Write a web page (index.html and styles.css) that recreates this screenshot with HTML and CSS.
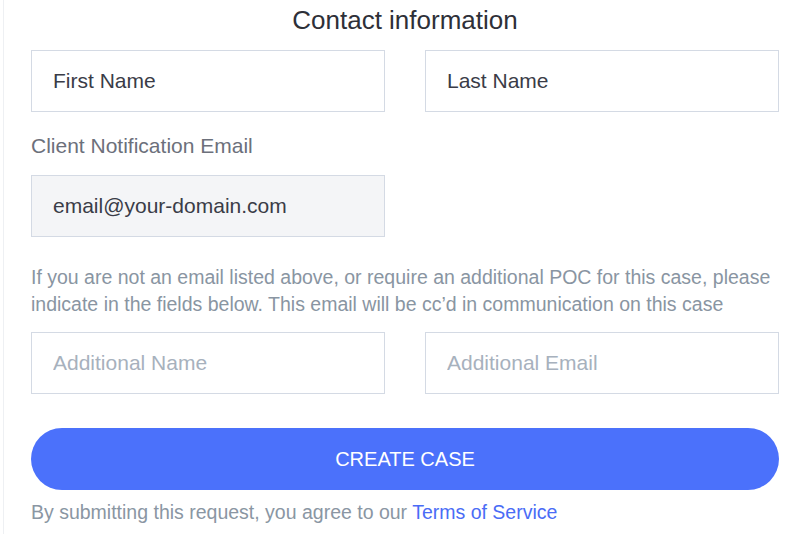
FILE: index.html
```html
<!DOCTYPE html>
<html>

<head>
    <meta charset="utf-8">
    <meta name="viewport" content="width=device-width,initial-scale=1.0">
    <title>Contact information</title>
    <link rel="stylesheet" href="styles.css">
</head>

<body>
    <div id="wrap">
        <form class="contact">
            <h2 class="title">Contact information</h2>
            <div class="row">
                <input type="text" class="field" placeholder="First Name">
                <input type="text" class="field" placeholder="Last Name">
            </div>
            <label class="label" for="notify">Client Notification Email</label>
            <div class="row">
                <input type="email" id="notify" class="field readonly" value="email@your-domain.com" readonly>
            </div>
            <p class="hint">If you are not an email listed above, or require an additional POC for this case, please indicate in the fields below. This email will be cc’d in communication on this case</p>
            <div class="row">
                <input type="text" class="field extra" placeholder="Additional Name">
                <input type="email" class="field extra" placeholder="Additional Email">
            </div>
            <button type="button" class="submit">CREATE CASE</button>
            <p class="terms">By submitting this request, you agree to our <a href="#">Terms of Service</a></p>
        </form>
    </div>
</body>

</html>
```

FILE: styles.css
```css
html,
body {
    margin: 0;
    padding: 0;
    height: 100%;
    background: #fff;
}

body {
    font-family: "Liberation Sans", Helvetica, Arial, sans-serif;
    color: #3a3c47;
}

#wrap {
    height: 100%;
    border-left: 1px solid #eef0f3;
    margin-left: 3px;
}

.contact {
    padding: 0 20px 0 27px;
}

.title {
    margin: 0 0 10px;
    font-size: 26px;
    font-weight: normal;
    line-height: 40px;
    text-align: center;
    color: #2e3038;
}

.row {
    display: grid;
    grid-template-columns: 1fr 1fr;
    gap: 40px;
}

.field {
    box-sizing: border-box;
    width: 100%;
    height: 62px;
    margin: 0;
    padding: 0 21px;
    border: 1px solid #d4dae4;
    border-radius: 0;
    background: #fff;
    font-family: inherit;
    font-size: 21px;
    color: #3a3c47;
    outline: none;
}

.field::placeholder {
    color: #3a3c47;
    opacity: 1;
}

.field.extra::placeholder {
    color: #a7b1bd;
}

.field.readonly {
    background: #f4f5f7;
}

.label {
    display: block;
    margin: 22px 0 17px;
    font-size: 21px;
    line-height: 24px;
    color: #6c707b;
}

.hint {
    margin: 27px 0 14px;
    font-size: 19.5px;
    line-height: 27px;
    color: #8995a2;
}

.submit {
    display: block;
    width: 100%;
    height: 62px;
    margin: 34px 0 0;
    border: 0;
    border-radius: 31px;
    background: #4b71fb;
    color: #fff;
    font-family: inherit;
    font-size: 20px;
    cursor: pointer;
}

.terms {
    margin: 10px 0 0;
    font-size: 19.5px;
    line-height: 24px;
    color: #8a96a3;
}

.terms a {
    color: #4a6cf6;
    text-decoration: none;
}
```
